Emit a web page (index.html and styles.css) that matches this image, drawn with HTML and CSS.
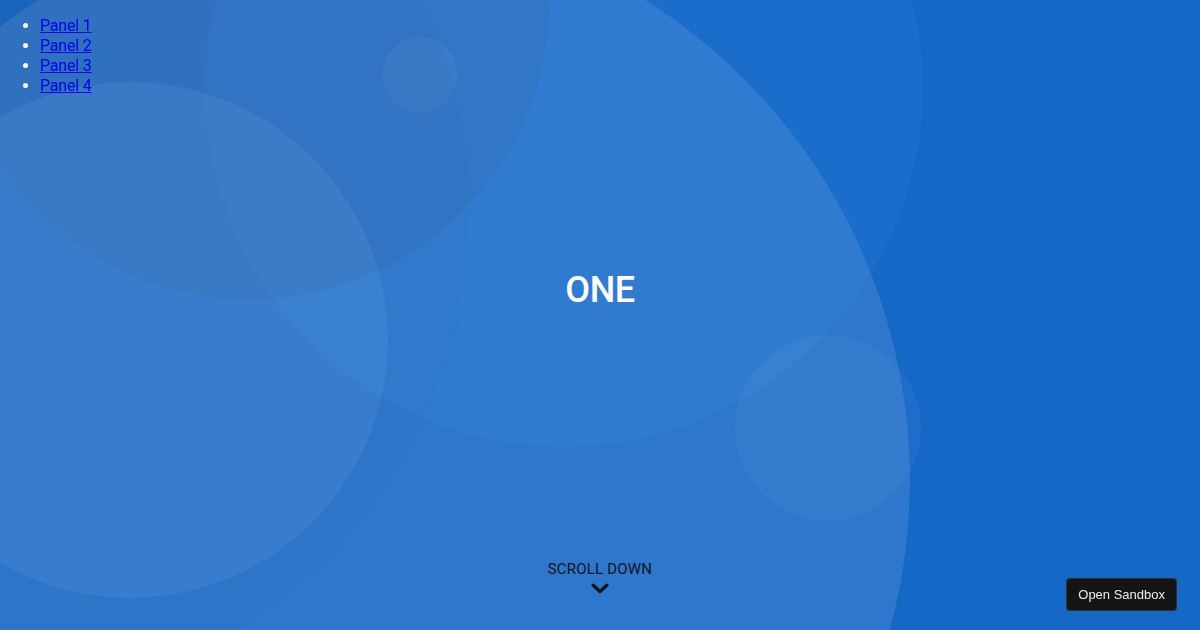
FILE: index.html
```html
<!DOCTYPE html>
<html lang="en">
<head>
<meta charset="utf-8">
<title>Panels</title>
<link rel="stylesheet" href="styles.css">
</head>
<body>
<nav class="menu">
  <ul class="menu-list">
    <li><a href="#panel-1">Panel 1</a></li>
    <li><a href="#panel-2">Panel 2</a></li>
    <li><a href="#panel-3">Panel 3</a></li>
    <li><a href="#panel-4">Panel 4</a></li>
  </ul>
</nav>
<main>
  <section class="panel" id="panel-1">
    <h1 class="panel-title">ONE</h1>
    <div class="scroll-down">
      <span class="scroll-label">SCROLL DOWN</span>
      <svg class="scroll-chevron" width="18" height="11" viewBox="0 0 18 11" aria-hidden="true">
        <polyline points="2.2,2.2 9,8.4 15.8,2.2" fill="none" stroke="#111418" stroke-width="3.4" stroke-linecap="round" stroke-linejoin="round"/>
      </svg>
    </div>
  </section>
</main>
<button class="sandbox-btn" type="button">Open Sandbox</button>
</body>
</html>
```

FILE: styles.css
```css
html, body {
  margin: 0;
  padding: 0;
}

body {
  font-family: Roboto, "Liberation Sans", Arial, sans-serif;
  background: #1668c7;
  overflow: hidden;
}

.menu {
  position: fixed;
  top: 0;
  left: 0;
  z-index: 2;
}

.menu-list {
  margin: 16px 0;
  padding-left: 40px;
  color: #ffffff;
  font-size: 16px;
  line-height: 20px;
}

.menu-list a {
  color: #0000ee;
  text-decoration: underline;
  letter-spacing: -0.2px;
}

.panel {
  position: relative;
  height: 100vh;
  display: flex;
  flex-direction: column;
  align-items: center;
  justify-content: center;
  padding-bottom: 50px;
  box-sizing: border-box;
  background:
    radial-gradient(circle 38px at 420px 75px, rgba(255,255,255,0.035) 37.5px, rgba(255,255,255,0) 38px),
    radial-gradient(circle 93px at 828px 428px, rgba(255,255,255,0.035) 92.5px, rgba(255,255,255,0) 93px),
    radial-gradient(circle 258px at 130px 340px, rgba(180,220,255,0.08) 257.5px, rgba(180,220,255,0) 258px),
    radial-gradient(circle 490px at -20px 213px, rgba(40,60,100,0.035) 489.5px, rgba(40,60,100,0) 490px),
    radial-gradient(circle 300px at 250px 0px, rgba(62,75,104,0.1) 299.5px, rgba(62,75,104,0) 300px),
    radial-gradient(circle 359px at 564px 88px, rgba(80,180,255,0.07) 358.5px, rgba(80,180,255,0) 359px),
    radial-gradient(circle 568px at 342px 480px, rgba(255,255,255,0.1) 567.5px, rgba(255,255,255,0) 568px),
    #1668c7;
}

.panel-title {
  margin: 0;
  color: #ffffff;
  font-size: 36px;
  font-weight: 500;
  line-height: 1;
  letter-spacing: -0.4px;
}

.scroll-down {
  position: absolute;
  left: 0;
  right: 0;
  bottom: 36px;
  display: flex;
  flex-direction: column;
  align-items: center;
  gap: 5px;
  color: #111418;
}

.scroll-label {
  font-size: 15px;
  line-height: 18px;
  letter-spacing: 0.2px;
}

.scroll-chevron {
  display: block;
}

.sandbox-btn {
  position: fixed;
  right: 23px;
  bottom: 19px;
  z-index: 3;
  height: 33px;
  padding: 0 11px;
  background: #151515;
  color: #ececec;
  border: 1px solid rgba(255,255,255,0.12);
  border-radius: 4px;
  font-family: "Liberation Sans", Arial, sans-serif;
  font-size: 13px;
  line-height: 15px;
}
```
